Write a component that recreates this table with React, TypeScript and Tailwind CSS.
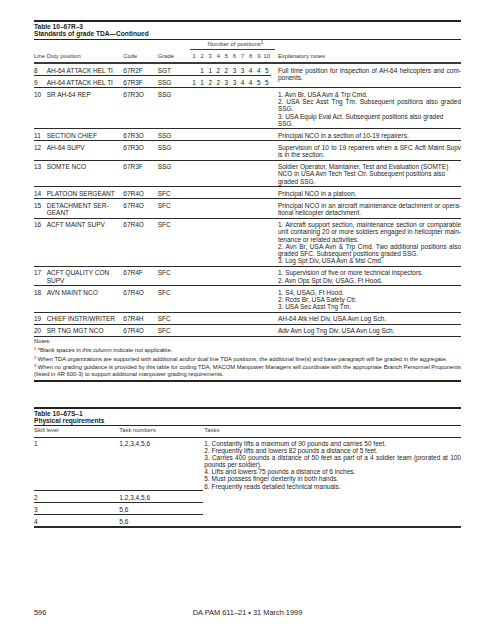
import { Fragment } from 'react';

type NoteLine = { text: string; justify?: boolean };

type PositionRow = {
  line: string;
  duty: string[];
  code: string;
  grade: string;
  counts?: string[];
  notes?: NoteLine[];
};

const j = (text: string): NoteLine => ({ text, justify: true });
const n = (text: string): NoteLine => ({ text });

const positionRows: PositionRow[] = [
  {
    line: '8',
    duty: ['AH-64 ATTACK HEL TI'],
    code: '67R2F',
    grade: 'SGT',
    counts: ['', '1', '1', '2', '2', '3', '3', '4', '4', '5'],
    notes: [j('Full time position for inspection of AH-64 helicopters and com-'), n('ponents.')]
  },
  {
    line: '9',
    duty: ['AH-64 ATTACK HEL TI'],
    code: '67R3F',
    grade: 'SSG',
    counts: ['1', '1', '2', '2', '3', '3', '4', '4', '5', '5']
  },
  {
    line: '10',
    duty: ['SR AH-64 REP'],
    code: '67R3O',
    grade: 'SSG',
    notes: [
      n('1. Avn Br, USA Avn & Trp Cmd.'),
      j('2. USA Sec Asst Tng Tm. Subsequent positions also graded'),
      n('SSG.'),
      n('3. USA Equip Eval Act. Subsequent positions also graded'),
      n('SSG.')
    ]
  },
  {
    line: '11',
    duty: ['SECTION CHIEF'],
    code: '67R3O',
    grade: 'SSG',
    notes: [n('Principal NCO in a section of 10-19 repairers.')]
  },
  {
    line: '12',
    duty: ['AH-64 SUPV'],
    code: '67R3O',
    grade: 'SSG',
    notes: [j('Supervision of 10 to 19 repairers when a SFC Acft Maint Supv'), n('is in the section.')]
  },
  {
    line: '13',
    duty: ['SOMTE NCO'],
    code: '67R3F',
    grade: 'SSG',
    notes: [
      n('Soldier Operator, Maintainer, Test and Evaluation (SOMTE)'),
      n('NCO in USA Avn Tech Test Ctr. Subsequent positions also'),
      n('graded SSG.')
    ]
  },
  {
    line: '14',
    duty: ['PLATOON SERGEANT'],
    code: '67R4O',
    grade: 'SFC',
    notes: [n('Principal NCO in a platoon.')]
  },
  {
    line: '15',
    duty: ['DETACHMENT SER-', 'GEANT'],
    code: '67R4O',
    grade: 'SFC',
    notes: [j('Principal NCO in an aircraft maintenance detachment or opera-'), n('tional helicopter detachment.')]
  },
  {
    line: '16',
    duty: ['ACFT MAINT SUPV'],
    code: '67R4O',
    grade: 'SFC',
    notes: [
      j('1. Aircraft support section, maintenance section or comparable'),
      j('unit containing 20 or more soldiers engaged in helicopter main-'),
      n('tenance or related activities.'),
      j('2. Avn Br, USA Avn & Trp Cmd. Two additional positions also'),
      n('graded SFC. Subsequent positions graded SSG.'),
      n('3. Log Spt Div, USA Avn & Msl Cmd.')
    ]
  },
  {
    line: '17',
    duty: ['ACFT QUALITY CON', 'SUPV'],
    code: '67R4F',
    grade: 'SFC',
    notes: [n('1. Supervision of five or more technical inspectors.'), n('2. Avn Ops Spt Div, USAG, Ft Hood.')]
  },
  {
    line: '18',
    duty: ['AVN MAINT NCO'],
    code: '67R4O',
    grade: 'SFC',
    notes: [n('1. S4, USAG, Ft Hood.'), n('2. Rcds Br, USA Safety Ctr.'), n('3. USA Sec Asst Tng Tm.')]
  },
  {
    line: '19',
    duty: ['CHIEF INSTR/WRITER'],
    code: '67R4H',
    grade: 'SFC',
    notes: [n('AH-64 Atk Hel Div, USA Avn Log Sch.')]
  },
  {
    line: '20',
    duty: ['SR TNG MGT NCO'],
    code: '67R4O',
    grade: 'SFC',
    notes: [n('Adv Avn Log Tng Div, USA Avn Log Sch.')]
  }
];

const physicalRows = [
  { level: '2', tasks: '1,2,3,4,5,6' },
  { level: '3', tasks: '5,6' },
  { level: '4', tasks: '5,6' }
];

const taskLines: NoteLine[] = [
  n('1. Constantly lifts a maximum of 90 pounds and carries 50 feet.'),
  n('2. Frequently lifts and lowers 82 pounds a distance of 5 feet.'),
  j('3. Carries 400 pounds a distance of 50 feet as part of a 4 soldier team (prorated at 100'),
  n('pounds per soldier).'),
  n('4. Lifts and lowers 75 pounds a distance of 6 inches.'),
  n('5. Must possess finger dexterity in both hands.'),
  n('6. Frequently reads detailed technical manuals.')
];

const cell = 'border-b border-[#2b2b2b] pt-[2.5px] pb-[1.2px]';
const headCell = 'border-b-2 border-[#3a3a3a] pt-[2.85px] pb-[1.65px] text-[5.9px] text-[#3a3a3a]';

const Lines = ({ lines }: { lines: NoteLine[] }) => (
  <>
    {lines.map((l, i) => (
      <div
        key={i}
        className={l.justify ? 'whitespace-nowrap text-justify [text-align-last:justify]' : 'whitespace-nowrap'}
      >
        {l.text}
      </div>
    ))}
  </>
);

export default function App() {
  return (
    <div className="flex h-[640px] w-[495px] flex-col bg-white px-[34px] pt-[20px] font-['Liberation_Sans',Arial,sans-serif] text-[#1c1c1c]">
      {/* Table 10-67R-3 */}
      <div className="border-t-2 border-b border-[#222] pt-[1px] pb-[1.2px] text-[6.6px] font-bold leading-[7.3px]">
        <div>Table 10–67R–3</div>
        <div>Standards of grade TDA—Continued</div>
      </div>
      <div className="grid grid-cols-[12.7px_76.6px_34.4px_32.3px_repeat(10,8.1px)_1fr] text-[6.5px] leading-[7.3px]">
        <div className="col-span-4" />
        <div className="col-span-10 -mr-[4px] border-b border-[#3a3a3a] pt-[1px] pb-[1.7px] pl-[6px] text-center text-[6px] leading-[7px] text-[#3a3a3a]">
          Number of positions<sup className="text-[4.5px]">1</sup>
        </div>
        <div />
        <div className={`${headCell} whitespace-nowrap`}>Line</div>
        <div className={headCell}>Duty position</div>
        <div className={headCell}>Code</div>
        <div className={headCell}>Grade</div>
        {Array.from({ length: 10 }, (_, i) => (
          <div key={i} className={`${headCell} text-center`}>
            {i + 1}
          </div>
        ))}
        <div className={`${headCell} pl-[7px]`}>Explanatory notes</div>

        {positionRows.map((row) => (
          <Fragment key={row.line}>
            <div className={cell}>{row.line}</div>
            <div className={`${cell} whitespace-nowrap`}>
              {row.duty.map((d) => (
                <div key={d}>{d}</div>
              ))}
            </div>
            <div className={cell}>{row.code}</div>
            <div className={cell}>{row.grade}</div>
            {Array.from({ length: 10 }, (_, i) => (
              <div key={i} className={`${cell} text-center`}>
                {row.counts?.[i] ?? ''}
              </div>
            ))}
            {row.line !== '9' && (
              <div className={`${cell} pl-[7px] ${row.line === '8' ? 'row-span-2' : ''}`}>
                <Lines lines={row.notes ?? []} />
              </div>
            )}
          </Fragment>
        ))}
      </div>

      {/* Notes */}
      <div className="border-b-2 border-[#222] pt-[1.6px] pb-[3px] text-[5.8px] leading-[6.5px]">
        <div>Notes:</div>
        <div className="mt-[2.4px]">
          <sup className="text-[4px]">1</sup> *Blank spaces in this column indicate not applicable.
        </div>
        <div className="mt-[2.4px]">
          <sup className="text-[4px]">2</sup> When TDA organizations are supported with additional and/or dual line TDA
          positions, the additional line(s) and base paragraph will be graded in the aggregate.
        </div>
        <div className="mt-[1.8px]">
          <div className="whitespace-nowrap text-justify [text-align-last:justify]">
            <sup className="text-[4px]">3</sup> When no grading guidance is provided by this table for coding TDA, MACOM
            Manpower Managers will coordinate with the appropriate Branch Personnel Proponents
          </div>
          <div>(listed in AR 600-3) to support additional manpower grading requirements.</div>
        </div>
      </div>

      {/* Table 10-67S-1 */}
      <div className="mt-[24.3px] border-t-2 border-b border-[#222] pt-[1.2px] pb-[1px] text-[6.6px] font-bold leading-[7px]">
        <div>Table 10–67S–1</div>
        <div>Physical requirements</div>
      </div>
      <div className="grid grid-cols-[85.3px_83.4px_1fr] text-[6.5px] leading-[7.15px]">
        <div className="border-b border-[#2b2b2b] pt-[0.6px] pb-[2.8px] text-[5.9px] text-[#3a3a3a]">Skill level</div>
        <div className="border-b border-[#2b2b2b] pt-[0.6px] pb-[2.8px] text-[5.9px] text-[#3a3a3a]">Task numbers</div>
        <div className="border-b border-[#2b2b2b] pt-[0.6px] pb-[2.8px] pl-[1.6px] text-[5.9px] text-[#3a3a3a]">Tasks</div>

        <div className="border-b border-[#2b2b2b] pt-[2.15px] pb-[1.4px]">1</div>
        <div className="border-b border-[#2b2b2b] pt-[2.15px] pb-[1.4px]">1,2,3,4,5,6</div>
        <div className="pt-[2.15px] pb-[1.4px] pl-[1.6px]">
          <Lines lines={taskLines} />
        </div>

        {physicalRows.map((row, i) => {
          const last = i === physicalRows.length - 1;
          const rowCell = last
            ? 'border-b-2 border-[#2b2b2b] pt-[2.6px] pb-[1.25px]'
            : 'border-b border-[#2b2b2b] pt-[2.6px] pb-[1.25px]';
          return (
            <Fragment key={row.level}>
              <div className={rowCell}>{row.level}</div>
              <div className={rowCell}>{row.tasks}</div>
              <div className={last ? rowCell : ''} />
            </Fragment>
          );
        })}
      </div>

      <footer className="mt-auto grid grid-cols-[1fr_auto_1fr] pb-[23px] text-[7.4px] leading-[9px]">
        <span>596</span>
        <span>DA PAM 611–21 • 31 March 1999</span>
        <span />
      </footer>
    </div>
  );
}
